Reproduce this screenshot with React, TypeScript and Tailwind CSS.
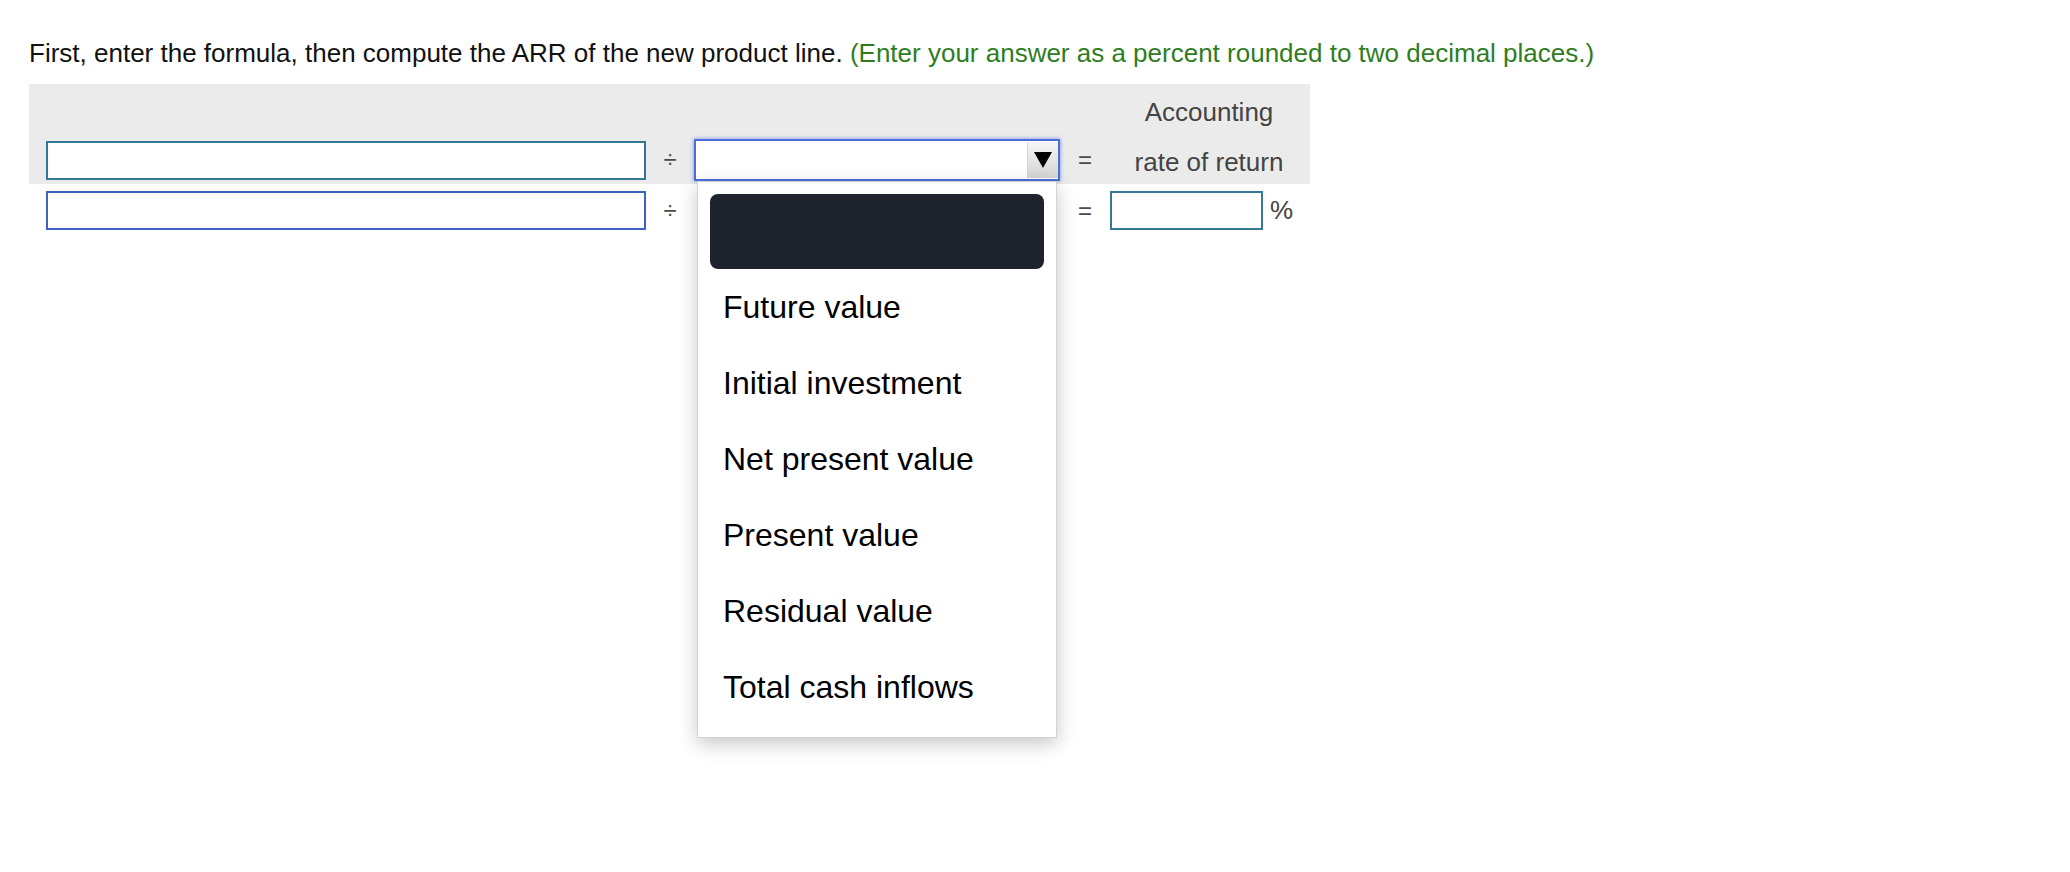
import React from 'react';

// Options of the open dropdown; the first one is the blank, highlighted entry
const options = [
  '',
  'Future value',
  'Initial investment',
  'Net present value',
  'Present value',
  'Residual value',
  'Total cash inflows',
];

function Divide() {
  return <div className="flex items-center justify-center text-[24px] text-[#4a4a4a]">÷</div>;
}

function Equals() {
  return <div className="flex items-center justify-center text-[24px] text-[#4a4a4a]">=</div>;
}

function SelectBox() {
  return (
    <div className="relative h-[40px]">
      <div className="-mt-[1px] flex h-[42px] w-[366px] items-stretch border-2 border-[#4a6fd6] bg-white shadow-[0_0_4px_rgba(60,100,220,0.7)]">
        <div className="flex-1" />
        <div className="my-[1px] flex w-[31px] items-center justify-center border-l border-[#d6d6d6] bg-gradient-to-b from-[#f6f6f6] to-[#d4d4d4]">
          <svg width="18" height="16" viewBox="0 0 18 16">
            <polygon points="0,0 18,0 9,16" fill="#000" />
          </svg>
        </div>
      </div>

      {/* open option list */}
      <div className="absolute left-[3px] top-[41px] z-10 w-[360px] border border-[#d3d3d3] bg-white px-[12px] py-[12px] shadow-[0_6px_18px_rgba(0,0,0,0.22)]">
        {options.map((opt, i) => (
          <div
            key={i}
            className={
              i === 0
                ? 'h-[75px] rounded-[8px] bg-[#1f232d]'
                : 'flex h-[76px] items-center pl-[13px] text-[32px] text-black'
            }
          >
            {opt}
          </div>
        ))}
      </div>
    </div>
  );
}

export default function App() {
  return (
    <div
      className="min-h-[872px] bg-white pl-[29px] pt-[38px]"
      style={{ fontFamily: '"Liberation Sans", Arial, sans-serif' }}
    >
      <p className="text-[26px] leading-[30px] text-[#111]">
        First, enter the formula, then compute the ARR of the new product line.{' '}
        <span className="text-[#2e7d21]">(Enter your answer as a percent rounded to two decimal places.)</span>
      </p>

      <div className="mt-[16px] w-[1281px]">
        <div className="bg-[#ebebeb] pb-[4px] pl-[17px]">
          <div className="grid grid-cols-[600px_48px_366px_50px_198px]">
            <div className="col-span-4 h-[56px]" />
            <div className="h-[56px] pt-[13px] text-center text-[26px] leading-[30px] text-[#444]">Accounting</div>

            <div className="flex h-[40px] items-center">
              <div className="h-[39px] w-[600px] border-2 border-[#357895] bg-white" />
            </div>
            <Divide />
            <SelectBox />
            <Equals />
            <div className="flex h-[40px] items-center justify-center pt-[4px] text-[26px] leading-[30px] text-[#444]">
              rate of return
            </div>
          </div>
        </div>

        <div className="mt-[7px] grid grid-cols-[600px_48px_366px_50px_198px] pl-[17px]">
          <div className="h-[39px] w-[600px] border-2 border-[#4062c2] bg-white" />
          <Divide />
          <div />
          <Equals />
          <div className="flex items-center gap-[7px]">
            <div className="h-[39px] w-[153px] border-2 border-[#357895] bg-white" />
            <span className="text-[26px] text-[#444]">%</span>
          </div>
        </div>
      </div>
    </div>
  );
}
